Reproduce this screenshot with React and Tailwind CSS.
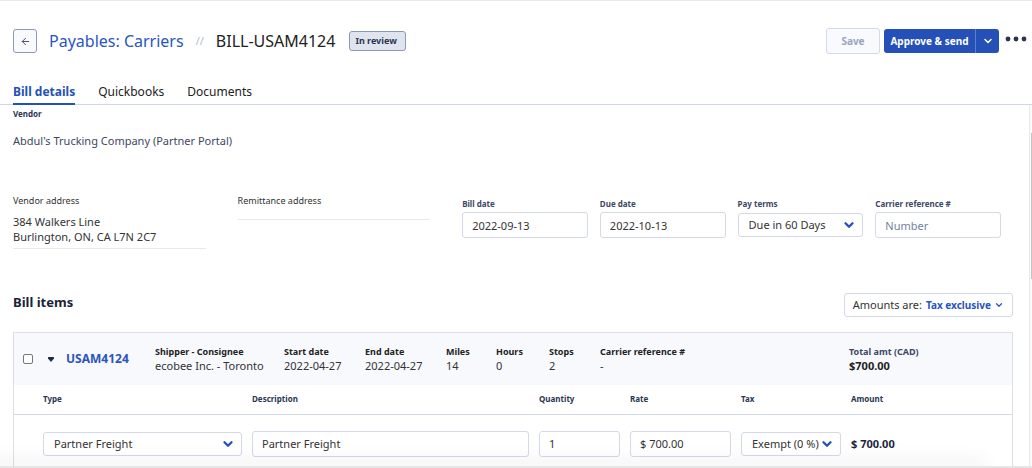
import React, { useState } from "react";
import { ArrowLeft, ChevronDown } from "lucide-react";

const tabs = ["Bill details", "Quickbooks", "Documents"];

const stops = [
  { label: "Shipper - Consignee", value: "ecobee Inc. - Toronto" },
  { label: "Start date", value: "2022-04-27" },
  { label: "End date", value: "2022-04-27" },
  { label: "Miles", value: "14" },
  { label: "Hours", value: "0" },
  { label: "Stops", value: "2" },
  { label: "Carrier reference #", value: "-" },
];

const inputClass =
  "block w-full h-[26px] rounded-[3px] border border-[#d3d9e8] bg-white px-[9px] text-[11px] text-[#333333] placeholder:text-[#7482a0] outline-none focus:border-[#2450b8]";

function SelectBox({ id, label, value, onChange, options }) {
  return (
    <div className="relative py-px">
      <select
        id={id}
        aria-label={label}
        value={value}
        onChange={onChange}
        className="block h-6 w-full appearance-none rounded-[3px] border border-[#d3d9e8] bg-white pl-[10px] pr-5 text-[11px] text-[#333333] outline-none focus:border-[#2450b8]"
      >
        {options.map((option) => (
          <option key={option}>{option}</option>
        ))}
      </select>
      <ChevronDown
        size={14}
        strokeWidth={4}
        className="pointer-events-none absolute right-[7px] top-[6px] text-[#2450b8]"
      />
    </div>
  );
}

function Field({ id, label, children }) {
  return (
    <div className="flex flex-col">
      <label htmlFor={id} className="h-[14px] text-[8px] leading-[12px] font-bold text-[#3d4766]">
        {label}
      </label>
      {children}
    </div>
  );
}

function Header() {
  return (
    <header className="flex items-center border-t border-[#e6e8ef] pl-[13px] pr-[5px] pt-[27px]">
      <button
        type="button"
        aria-label="Back"
        className="flex h-6 w-6 items-center justify-center rounded-[3px] border border-[#8e99b5] bg-[#f8fafd] text-[#3a4564]"
      >
        <ArrowLeft size={11} strokeWidth={2} />
      </button>
      <a href="#payables" className="ml-3 text-[16px] leading-6 text-[#2a55bf]">
        Payables: Carriers
      </a>
      <span className="mx-3 text-[11px] text-[#b3bac8]">//</span>
      <h1 className="text-[16px] leading-6 text-[#222222]">BILL-USAM4124</h1>
      <span className="ml-[14px] h-5 rounded-[3px] border border-[#8e99b5] bg-[#e0e4ee] pl-[5px] pr-2 text-[9px] leading-[18px] font-bold text-[#2b3553]">
        In review
      </span>

      <div className="ml-auto flex items-center">
        <button
          type="button"
          disabled
          className="h-[26px] w-[54px] rounded-[3px] border border-[#d3d9e8] bg-[#f8fafd] text-[10px] font-bold text-[#9aa5bd]"
        >
          Save
        </button>
        <div className="ml-1 flex h-6 overflow-hidden rounded-[3px] bg-[#2450b8] text-white">
          <button type="button" className="w-[91px] text-[10px] font-bold">
            Approve &amp; send
          </button>
          <button
            type="button"
            aria-label="More send options"
            className="flex w-6 items-center justify-center border-l border-[#5d7fd0]"
          >
            <ChevronDown size={12} strokeWidth={3} />
          </button>
        </div>
        <button type="button" aria-label="More actions" className="mb-1 ml-[6px]">
          <svg width="22" height="6" viewBox="0 0 22 6" fill="#2b3553">
            <circle cx="3" cy="3" r="2.4" />
            <circle cx="11" cy="3" r="2.4" />
            <circle cx="19" cy="3" r="2.4" />
          </svg>
        </button>
      </div>
    </header>
  );
}

function Tabs({ active, onSelect }) {
  return (
    <nav className="mt-6 flex gap-[23px] border-b border-[#ced8e5] px-[13px]">
      {tabs.map((tab) => (
        <button
          key={tab}
          type="button"
          onClick={() => onSelect(tab)}
          className={
            tab === active
              ? "-mb-px h-[27px] border-b-2 border-[#2450b8] text-[12px] leading-[27px] font-bold text-[#2450b8]"
              : "-mb-px h-[27px] border-b-2 border-transparent text-[12px] leading-[27px] text-[#222222]"
          }
        >
          {tab}
        </button>
      ))}
    </nav>
  );
}

function BillInfo() {
  const [billDate, setBillDate] = useState("2022-09-13");
  const [dueDate, setDueDate] = useState("2022-10-13");
  const [terms, setTerms] = useState("Due in 60 Days");
  const [reference, setReference] = useState("");

  return (
    <section>
      <h2 className="pt-[3px] text-[8px] leading-[12px] font-bold text-[#2b3553]">Vendor</h2>
      <p className="mt-3 text-[11px] leading-[18px] text-[#3d4766]">
        Abdul's Trucking Company (Partner Portal)
      </p>

      <div className="mt-11 grid grid-cols-[193fr_193fr_540fr] items-start gap-8 pr-3">
        <div className="border-b border-[#e8e8e8] pb-1">
          <h3 className="text-[9px] leading-[14px] text-[#333333]">Vendor address</h3>
          <p className="mt-[6px] text-[11px] leading-[15px] text-[#333333]">
            384 Walkers Line
            <br />
            Burlington, ON, CA L7N 2C7
          </p>
        </div>
        <div className="border-b border-[#e8e8e8] pb-[11px]">
          <h3 className="text-[9px] leading-[14px] text-[#333333]">Remittance address</h3>
        </div>
        <div className="mt-1 grid grid-cols-4 gap-3">
          <Field id="bill-date" label="Bill date">
            <input
              id="bill-date"
              type="text"
              value={billDate}
              onChange={(e) => setBillDate(e.target.value)}
              className={inputClass}
            />
          </Field>
          <Field id="due-date" label="Due date">
            <input
              id="due-date"
              type="text"
              value={dueDate}
              onChange={(e) => setDueDate(e.target.value)}
              className={inputClass}
            />
          </Field>
          <Field id="pay-terms" label="Pay terms">
            <SelectBox
              id="pay-terms"
              value={terms}
              onChange={(e) => setTerms(e.target.value)}
              options={["Due in 60 Days", "Due in 30 Days", "Due on receipt"]}
            />
          </Field>
          <Field id="carrier-reference" label="Carrier reference #">
            <input
              id="carrier-reference"
              type="text"
              placeholder="Number"
              value={reference}
              onChange={(e) => setReference(e.target.value)}
              className={inputClass}
            />
          </Field>
        </div>
      </div>
    </section>
  );
}

function ItemsTable() {
  const [item, setItem] = useState({
    type: "Partner Freight",
    description: "Partner Freight",
    quantity: "1",
    rate: "$ 700.00",
    tax: "Exempt (0 %)",
  });

  const update = (key) => (e) => setItem({ ...item, [key]: e.target.value });

  return (
    <table className="w-full table-fixed text-left">
      <colgroup>
        <col className="w-[29px]" />
        <col className="w-[209px]" />
        <col />
        <col className="w-[91px]" />
        <col className="w-[111px]" />
        <col className="w-[110px]" />
        <col className="w-[161px]" />
      </colgroup>
      <thead>
        <tr className="h-[29px] border-b border-[#d3d9e8] text-[8px] text-[#2b3553]">
          <td />
          <th scope="col">Type</th>
          <th scope="col">Description</th>
          <th scope="col">Quantity</th>
          <th scope="col">Rate</th>
          <th scope="col">Tax</th>
          <th scope="col">Amount</th>
        </tr>
      </thead>
      <tbody>
        <tr className="h-[59px]">
          <td />
          <td className="pr-[10px]">
            <SelectBox
              label="Type"
              value={item.type}
              onChange={update("type")}
              options={["Partner Freight", "Fuel surcharge", "Detention"]}
            />
          </td>
          <td className="pr-[10px]">
            <input
              aria-label="Description"
              type="text"
              value={item.description}
              onChange={update("description")}
              className={inputClass}
            />
          </td>
          <td className="pr-[10px]">
            <input
              aria-label="Quantity"
              type="text"
              value={item.quantity}
              onChange={update("quantity")}
              className={inputClass}
            />
          </td>
          <td className="pr-[10px]">
            <input
              aria-label="Rate"
              type="text"
              value={item.rate}
              onChange={update("rate")}
              className={inputClass}
            />
          </td>
          <td className="pr-[10px]">
            <SelectBox
              label="Tax"
              value={item.tax}
              onChange={update("tax")}
              options={["Exempt (0 %)", "GST (5 %)", "HST (13 %)"]}
            />
          </td>
          <td className="text-[11px] font-bold text-[#1c2540]">$ 700.00</td>
        </tr>
      </tbody>
    </table>
  );
}

function BillItems() {
  const [checked, setChecked] = useState(false);
  const [open, setOpen] = useState(true);

  return (
    <section className="mt-11">
      <div className="flex items-start justify-between">
        <h2 className="text-[13px] leading-[18px] font-bold text-[#1a2238]">Bill items</h2>
        <button
          type="button"
          className="flex h-6 items-center rounded-[3px] border border-[#d3d9e8] px-2 text-[11px] text-[#333333]"
        >
          Amounts are:
          <span className="ml-1 text-[10px] font-bold text-[#2a55bf]">Tax exclusive</span>
          <ChevronDown size={10} strokeWidth={3} className="ml-[3px] text-[#2a55bf]" />
        </button>
      </div>

      <div className="mt-[15px] border border-b-0 border-[#dcdfe8]">
        <div className="grid h-[52px] grid-cols-[25px_18px_89px_129px_81px_81px_50px_53px_51px_1fr_163px] items-center bg-[#f7f9fd] pl-[9px]">
          <input
            type="checkbox"
            aria-label="Select USAM4124"
            checked={checked}
            onChange={(e) => setChecked(e.target.checked)}
            className="h-[10px] w-[10px] appearance-none rounded-[2px] border border-[#777777] bg-white checked:bg-[#2450b8]"
          />
          <button type="button" aria-label="Toggle items" onClick={() => setOpen(!open)}>
            <svg width="6" height="5" viewBox="0 0 6 5" fill="#1f2a4a">
              <path d="M0 0.6Q0 0 .6 0H5.4Q6 0 6 .6L6 1.6L3.4 4.6Q3 5 2.6 4.6L0 1.6Z" />
            </svg>
          </button>
          <a href="#usam4124" className="text-[12px] font-bold text-[#2a55bf]">
            USAM4124
          </a>
          {stops.map(({ label, value }) => (
            <div key={label} className="text-[11px] leading-[14px] text-[#333333]">
              <div className="text-[9px] font-bold text-[#222222]">{label}</div>
              <div>{value}</div>
            </div>
          ))}
          <div className="text-[11px] leading-[14px] font-bold text-[#222222]">
            <div className="text-[9px] text-[#3d4766]">Total amt (CAD)</div>
            <div>$700.00</div>
          </div>
        </div>
        {open && <ItemsTable />}
      </div>
    </section>
  );
}

export default function App() {
  const [activeTab, setActiveTab] = useState("Bill details");

  return (
    <div className="flex h-screen flex-col overflow-hidden bg-white font-['Noto_Sans',sans-serif]">
      <Header />
      <Tabs active={activeTab} onSelect={setActiveTab} />
      <div className="flex min-h-0 flex-1">
        <main className="min-w-0 flex-1 overflow-hidden pl-[13px] pr-4">
          <BillInfo />
          <BillItems />
        </main>
        <div className="w-[3px] border-l border-[#e8e8e8] bg-[#fafafa] pl-px pt-7">
          <div className="h-[146px] bg-[#c4c4c4]" />
        </div>
      </div>
      <footer className="relative h-[2px] bg-[#e6e6e6] shadow-[-50px_0_20px_4px_rgba(0,0,0,0.08)]" />
    </div>
  );
}
